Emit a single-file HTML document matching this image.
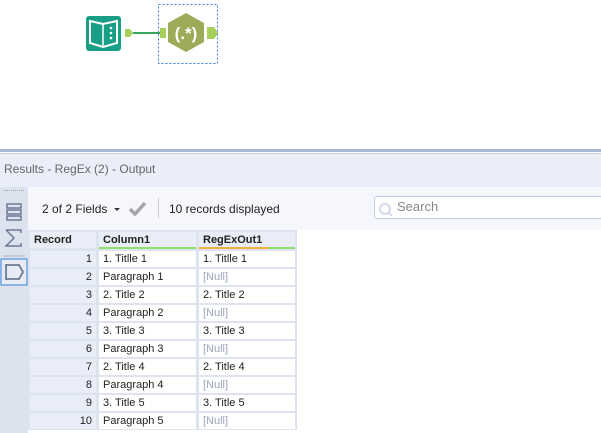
<!DOCTYPE html>
<html><head><meta charset="utf-8"><style>
*{margin:0;padding:0;box-sizing:border-box}
body{width:601px;height:433px;overflow:hidden;background:#fff;font-family:"Liberation Sans",sans-serif;position:relative;font-size:12px}
.a{position:absolute}
.c{position:absolute;height:16px;line-height:17px;padding-left:4px;font-size:11px;color:#222;white-space:nowrap}
.r{background:#e9edf7;text-align:right;padding-right:4px;left:30px;width:66px}
.c1{background:#fff;left:99px;width:97px}
.c2{background:#fff;left:199px;width:96px}
.nul{color:#9aa3b8}
</style></head><body>
<svg class="a" style="left:0;top:0" width="601" height="148">
<rect x="86" y="16" width="35" height="35" rx="3" fill="#1a9f87"/>
<path d="M90 21 L103 24 L117 21 L117 43 L103 47 L90 43 Z" fill="none" stroke="#fff" stroke-width="2"/>
<path d="M103 24 L103 47" stroke="#fff" stroke-width="1.5"/>
<circle cx="111" cy="28" r="1.3" fill="#fff"/><circle cx="111" cy="33" r="1.3" fill="#fff"/><circle cx="111" cy="38" r="1.3" fill="#fff"/>
<path d="M125 29 h5 l3 4 l-3 4 h-5z" fill="#a8cf5a"/>
<line x1="133" y1="33" x2="160" y2="33" stroke="#3aa55a" stroke-width="2"/>
<rect x="160" y="28" width="6" height="10" fill="#a8cf5a"/>
<path d="M186 13 L204 23 L204 42 L186 52 L168 42 L168 23 Z" fill="#9bab58"/>
<text x="186" y="39" font-family="Liberation Sans" font-weight="bold" font-size="17" fill="#fff" text-anchor="middle">(.*)</text>
<path d="M207 27 h7 l4 6 l-4 6 h-7z" fill="#a8cf5a"/>
<rect x="158.5" y="4.5" width="59" height="59" fill="none" stroke="#3a7dd8" stroke-dasharray="2,2"/>
</svg>
<div class="a" style="left:0;top:149px;width:601px;height:3px;background:#aab8d8"></div>
<div class="a" style="left:0;top:153px;width:601px;height:1px;background:#c9cfd9"></div>
<div class="a" style="left:0;top:154px;width:601px;height:33px;background:#eaeef8"></div>
<div class="a" style="left:4px;top:162px;font-size:12px;color:#666">Results - RegEx (2) - Output</div>
<div class="a" style="left:0;top:187px;width:28px;height:246px;background:#dce3ef"></div>
<div class="a" style="left:4px;top:190px;width:20px;border-top:1px dotted #9aa6bc"></div>
<svg class="a" style="left:0;top:187px" width="28" height="110">
<rect x="7" y="17" width="14" height="4" fill="none" stroke="#6d7a95" stroke-width="1.5"/>
<rect x="7" y="23" width="14" height="4" fill="none" stroke="#6d7a95" stroke-width="1.5"/>
<rect x="7" y="29" width="14" height="4" fill="none" stroke="#6d7a95" stroke-width="1.5"/>
<path d="M6 43 H21 V46 M6 43 L14 51 L6 59 H21 V56" fill="none" stroke="#6d7a95" stroke-width="1.5"/>
<line x1="3" y1="69" x2="25" y2="69" stroke="#a8b2c4"/>
<rect x="1" y="72" width="26" height="26" fill="#e6ebf4" stroke="#2f7fd6"/>
<path d="M6 78 H19 L23 85 L19 92 H6 Z" fill="none" stroke="#6d7a95" stroke-width="1.8"/>
</svg>
<div class="a" style="left:28px;top:187px;width:573px;height:43px;background:#f5f7fc"></div>
<div class="a" style="left:42px;top:202px;font-size:12px;color:#222">2 of 2 Fields</div>
<div class="a" style="left:114px;top:208px;width:0;height:0;border-left:3px solid transparent;border-right:3px solid transparent;border-top:3px solid #333"></div>
<svg class="a" style="left:128px;top:200px" width="20" height="16"><path d="M2 9 L7 14 L17 3" fill="none" stroke="#a5a5a5" stroke-width="3.5"/></svg>
<div class="a" style="left:158px;top:198px;width:1px;height:20px;background:#ccc"></div>
<div class="a" style="left:169px;top:202px;font-size:12px;color:#222">10 records displayed</div>
<div class="a" style="left:374px;top:196px;width:227px;height:23px;background:#fff;border:1px solid #c6cde0;border-right:none;border-radius:3px 0 0 3px"></div>
<svg class="a" style="left:378px;top:202px" width="16" height="16"><circle cx="7" cy="7" r="5" fill="none" stroke="#c6d0e4" stroke-width="1.5"/><line x1="11" y1="11" x2="14" y2="14" stroke="#c6d0e4" stroke-width="1.5"/></svg>
<div class="a" style="left:397px;top:199px;font-size:13px;color:#888">Search</div>
<div class="a" style="left:28px;top:230px;width:269px;height:200px;background:#dde3ef"></div>
<div class="c r" style="top:232px;text-align:left;font-weight:bold;padding-left:4px;background:#e9edf7">Record</div>
<div class="c" style="top:232px;left:99px;width:97px;background:#e9edf7;font-weight:bold;border-bottom:2px solid #8fe06a;height:17px">Column1</div>
<div class="c" style="top:232px;left:199px;width:96px;background:#e9edf7;font-weight:bold;border-bottom:2px solid #8fe06a;height:17px">RegExOut1<div class="a" style="left:0;bottom:-2px;width:70px;height:2px;background:#f0b040"></div></div>
<div class="c r" style="top:251px">1</div><div class="c c1" style="top:251px">1. Titlle 1</div><div class="c c2" style="top:251px">1. Titlle 1</div>
<div class="c r" style="top:269px">2</div><div class="c c1" style="top:269px">Paragraph 1</div><div class="c c2 nul" style="top:269px">[Null]</div>
<div class="c r" style="top:287px">3</div><div class="c c1" style="top:287px">2. Title 2</div><div class="c c2" style="top:287px">2. Title 2</div>
<div class="c r" style="top:305px">4</div><div class="c c1" style="top:305px">Paragraph 2</div><div class="c c2 nul" style="top:305px">[Null]</div>
<div class="c r" style="top:323px">5</div><div class="c c1" style="top:323px">3. Title 3</div><div class="c c2" style="top:323px">3. Title 3</div>
<div class="c r" style="top:341px">6</div><div class="c c1" style="top:341px">Paragraph 3</div><div class="c c2 nul" style="top:341px">[Null]</div>
<div class="c r" style="top:359px">7</div><div class="c c1" style="top:359px">2. Title 4</div><div class="c c2" style="top:359px">2. Title 4</div>
<div class="c r" style="top:377px">8</div><div class="c c1" style="top:377px">Paragraph 4</div><div class="c c2 nul" style="top:377px">[Null]</div>
<div class="c r" style="top:395px">9</div><div class="c c1" style="top:395px">3. Title 5</div><div class="c c2" style="top:395px">3. Title 5</div>
<div class="c r" style="top:413px">10</div><div class="c c1" style="top:413px">Paragraph 5</div><div class="c c2 nul" style="top:413px">[Null]</div>
</body></html>
